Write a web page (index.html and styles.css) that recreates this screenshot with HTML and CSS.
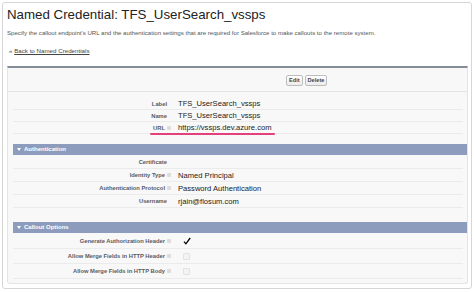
FILE: index.html
```html
<!DOCTYPE html>
<html>
<head>
<meta charset="utf-8">
<link rel="stylesheet" href="styles.css">
</head>
<body>
<div class="card">
  <h1 class="title">Named Credential: TFS_UserSearch_vssps</h1>
  <p class="desc">Specify the callout endpoint's URL and the authentication settings that are required for Salesforce to make callouts to the remote system.</p>
  <div class="back">« <a href="#">Back to Named Credentials</a></div>
  <div class="panel">
    <div class="btnrow">
      <button class="btn">Edit</button>
      <button class="btn">Delete</button>
    </div>
    <div class="fields first">
      <div class="row"><div class="lbl">Label</div><div class="val">TFS_UserSearch_vssps</div></div>
      <div class="row"><div class="lbl">Name</div><div class="val">TFS_UserSearch_vssps</div></div>
      <div class="row url"><div class="lbl icon">URL<span class="help"></span></div><div class="val">https://vssps.dev.azure.com</div><span class="mark"></span></div>
    </div>
    <div class="sechead"><svg class="tri" width="4" height="3" viewBox="0 0 4 3"><path d="M0 0H4L2 3Z" fill="#fff"/></svg>Authentication</div>
    <div class="fields">
      <div class="row"><div class="lbl">Certificate</div><div class="val"></div></div>
      <div class="row"><div class="lbl icon">Identity Type<span class="help"></span></div><div class="val">Named Principal</div></div>
      <div class="row"><div class="lbl icon">Authentication Protocol<span class="help"></span></div><div class="val">Password Authentication</div></div>
      <div class="row"><div class="lbl">Username</div><div class="val">rjain@flosum.com</div></div>
    </div>
    <div class="sechead second"><svg class="tri" width="4" height="3" viewBox="0 0 4 3"><path d="M0 0H4L2 3Z" fill="#fff"/></svg>Callout Options</div>
    <div class="fields opts">
      <div class="row"><div class="lbl icon">Generate Authorization Header<span class="help"></span></div><div class="val"><svg class="check" width="8" height="8" viewBox="0 0 8 8"><path d="M1 4.6L2.9 6.8L7.2 1" fill="none" stroke="#000" stroke-width="1.3"/></svg></div></div>
      <div class="row"><div class="lbl icon">Allow Merge Fields in HTTP Header<span class="help"></span></div><div class="val"><span class="box"></span></div></div>
      <div class="row"><div class="lbl icon">Allow Merge Fields in HTTP Body<span class="help"></span></div><div class="val"><span class="box"></span></div></div>
    </div>
  </div>
</div>
</body>
</html>
```
FILE: styles.css
```css
* { box-sizing: border-box; margin: 0; padding: 0; }
body { margin: 0; background: #fff; font-family: "Liberation Sans", Arial, sans-serif; color: #000; }
.card {
  margin: 2px 0 0 2px;
  width: 470px;
  height: 287px;
  border: 1px solid #d6d6d6;
  border-radius: 3px;
  padding: 0 0 0 4px;
  background: #fff;
}
.title {
  margin-top: 4px;
  font-size: 13.3px;
  line-height: 16px;
  font-weight: normal;
  color: #222;
}
.desc {
  margin-top: 6px;
  font-size: 6.1px;
  line-height: 8px;
  color: #555;
  white-space: nowrap;
}
.back {
  margin-top: 10px;
  padding-left: 2px;
  font-size: 6.2px;
  line-height: 8px;
  color: #555;
}
.back a { color: #444; text-decoration: underline; }
.panel {
  margin-top: 11px;
  width: 461px;
  height: 218px;
  border-top: 2px solid #858d98;
  border-left: 1px solid #e4e4e4;
  border-right: 1px solid #e4e4e4;
  border-bottom: 1px solid #e4e4e4;
  border-radius: 0 0 3px 3px;
  background: #f8f8f8;
}
.btnrow {
  height: 24px;
  padding: 7px 0 0 278px;
  border-bottom: 1px solid #e3e3e3;
  display: flex;
  gap: 2px;
  align-items: flex-start;
}
.btn {
  height: 11px;
  padding: 0 2px;
  font-family: "Liberation Sans", Arial, sans-serif;
  font-size: 5.6px;
  font-weight: bold;
  color: #444;
  border: 1px solid #bdbdbd;
  border-radius: 2px;
  background: linear-gradient(#ffffff, #ececec);
  line-height: 9px;
}
.fields { padding: 1px 4px 0 5px; }
.fields.first { padding-top: 6px; }
.row {
  display: grid;
  grid-template-columns: 158px 1fr;
  column-gap: 7px;
  height: 13px;
  align-items: center;
  border-bottom: 1px solid #ebebeb;
}
.first .row { height: 12px; }
.opts .row { height: 15px; }
.url { position: relative; }
.lbl {
  text-align: right;
  font-size: 5.8px;
  font-weight: bold;
  color: #5a5a64;
  padding-right: 4px;
  white-space: nowrap;
}
.lbl.icon { padding-right: 0; }
.help {
  display: inline-block;
  width: 4px;
  height: 4px;
  margin-left: 2px;
  background: #dcdcdc;
  border-radius: 1px;
  vertical-align: middle;
}
.val {
  font-size: 7.6px;
  color: #222;
  white-space: nowrap;
  display: flex;
  align-items: center;
}
.mark {
  position: absolute;
  left: 137px;
  top: 11px;
  width: 125px;
  height: 2px;
  background: #e2417b;
  border-radius: 1px;
}
.sechead {
  margin: 10px 0 0 5px;
  height: 11px;
  background: #8d9cbd;
  color: #fff;
  font-size: 6px;
  font-weight: bold;
  line-height: 11px;
  padding-left: 4px;
  display: flex;
  align-items: center;
}
.sechead.second { margin-top: 14px; }
.tri { margin-right: 3px; }
.check { margin-left: 5px; }
.box {
  display: inline-block;
  width: 7px;
  height: 7px;
  margin-left: 5px;
  border: 1px solid #e2e2e2;
  background: #f3f3f3;
  border-radius: 1px;
}
```
